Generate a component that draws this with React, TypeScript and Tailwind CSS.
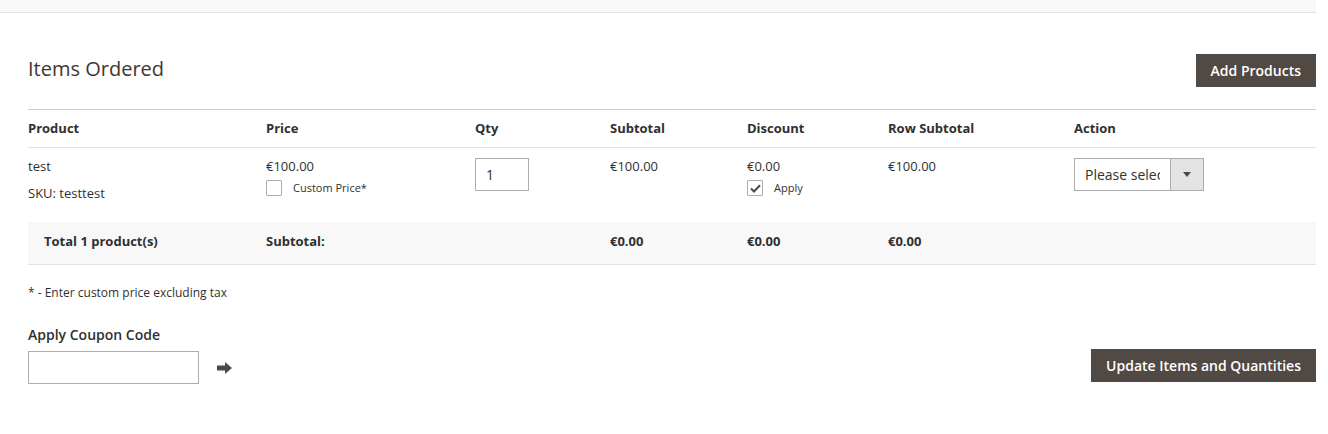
import React from "react";

const cols = "grid grid-cols-[238px_209px_135px_137px_141px_186px_242px]";

function Checkbox({ checked }: { checked?: boolean }) {
  return (
    <span className="inline-flex h-4 w-4 items-center justify-center rounded-[1px] border border-[#adadad] bg-white">
      {checked && (
        <svg width="11" height="9" viewBox="0 0 11 9">
          <path d="M1 4.5 L4 7.5 L10 1.2" fill="none" stroke="#514943" strokeWidth="2" />
        </svg>
      )}
    </span>
  );
}

export default function App() {
  return (
    <div className="min-h-[434px] bg-white text-[#303030]" style={{ fontFamily: '"Open Sans", sans-serif' }}>
      <div className="mr-3 h-[13px] border-b border-[#e3e3e3] bg-[#f8f8f8]" />
      <div className="pl-7 pr-3">
        <div className="flex items-center justify-between pt-[41px] pb-[22px]">
          <h2 className="-mt-[4px] text-[20px] font-normal leading-[28px] text-[#41362f]">Items Ordered</h2>
          <button className="h-[33px] bg-[#514943] px-[15px] text-[14px] font-semibold text-white">Add Products</button>
        </div>

        <div className={`${cols} h-[39px] items-center border-t border-b border-t-[#cccccc] border-b-[#e3e3e3] text-[13px] font-bold`}>
          <div>Product</div>
          <div>Price</div>
          <div>Qty</div>
          <div>Subtotal</div>
          <div>Discount</div>
          <div>Row Subtotal</div>
          <div>Action</div>
        </div>

        <div className={`${cols} h-[74px] pt-[9px] text-[13px]`}>
          <div>
            <div className="leading-[18px]">test</div>
            <div className="mt-[9px] leading-[18px]">SKU: testtest</div>
          </div>
          <div>
            <div className="leading-[18px]">€100.00</div>
            <label className="mt-[5px] flex items-center gap-[11px] text-[11px]">
              <Checkbox />
              <span>Custom Price*</span>
            </label>
          </div>
          <div className="pt-px">
            <div className="flex h-[33px] w-[54px] items-center border border-[#adadad] px-[10px] text-[14px]">1</div>
          </div>
          <div className="leading-[18px]">€100.00</div>
          <div>
            <div className="leading-[18px]">€0.00</div>
            <label className="mt-[5px] flex items-center gap-[11px] text-[11px]">
              <Checkbox checked />
              <span>Apply</span>
            </label>
          </div>
          <div className="leading-[18px]">€100.00</div>
          <div className="pt-px">
            <div className="flex h-[33px] w-[130px] border border-[#adadad]">
              <div className="flex-1 pl-[10px]">
                <div className="w-[75px] overflow-hidden whitespace-nowrap text-[14px] leading-[31px]">Please select</div>
              </div>
              <div className="flex w-[33px] items-center justify-center border-l border-[#adadad] bg-[#e3e3e3]">
                <svg width="8" height="5" viewBox="0 0 8 5">
                  <path d="M0 0 H8 L4 5 Z" fill="#514943" />
                </svg>
              </div>
            </div>
          </div>
        </div>

        <div className={`${cols} h-[43px] items-center border-b border-[#e3e3e3] bg-[#f8f8f8] pb-[3px] text-[13px] font-bold`}>
          <div className="pl-4">Total 1 product(s)</div>
          <div>Subtotal:</div>
          <div />
          <div>€0.00</div>
          <div>€0.00</div>
          <div>€0.00</div>
          <div />
        </div>

        <div className="mt-[19px] text-[12px] leading-[18px]">* - Enter custom price excluding tax</div>

        <div className="mt-[23px] flex items-end justify-between">
          <div>
            <div className="text-[14px] font-semibold leading-[20px]">Apply Coupon Code</div>
            <div className="mt-[6px] flex items-center">
              <div className="h-[33px] w-[171px] border border-[#adadad] bg-white" />
              <svg className="ml-[18px]" width="15" height="12" viewBox="0 0 15 12">
                <path d="M0 3.5 H8 V0 L15 6 L8 12 V8.5 H0 Z" fill="#514943" />
              </svg>
            </div>
          </div>
          <button className="mb-[2px] h-[33px] bg-[#514943] px-[15px] text-[14px] font-semibold text-white">Update Items and Quantities</button>
        </div>
      </div>
    </div>
  );
}
